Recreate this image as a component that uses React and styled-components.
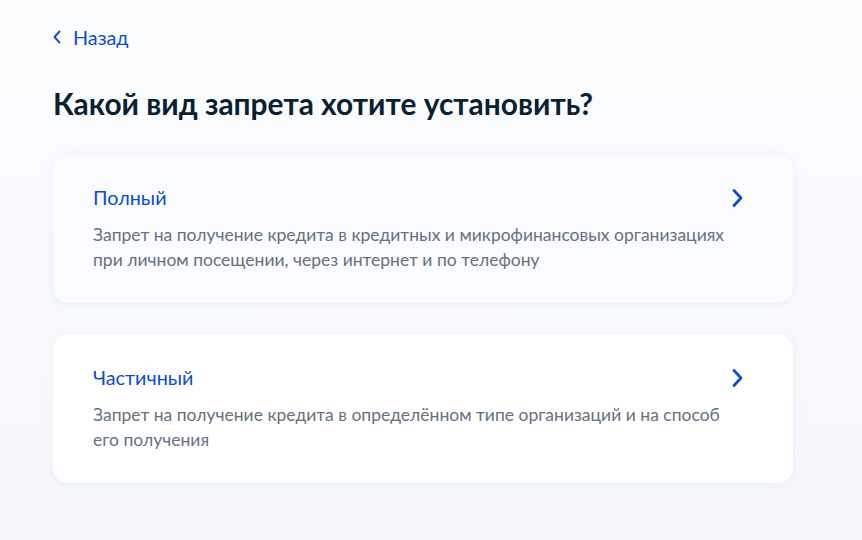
import React from 'react';
import styled, { createGlobalStyle } from 'styled-components';

const GlobalStyle = createGlobalStyle`
  html, body {
    margin: 0;
    padding: 0;
    background: #f6f8fb;
  }
  body {
    font-family: Lato, "Noto Sans", sans-serif;
    -webkit-font-smoothing: antialiased;
  }
`;

const Page = styled.main`
  width: 862px;
  height: 540px;
  box-sizing: border-box;
  padding: 24px 69px 0 53px;
  background: linear-gradient(180deg, #fbfcfe 0%, #f5f7fb 100%);
`;

const BackLink = styled.a`
  display: inline-flex;
  align-items: center;
  gap: 12px;
  color: #0d4cd3;
  font-size: 19.8px;
  line-height: 26px;
  text-decoration: none;
  cursor: pointer;
`;

const Heading = styled.h1`
  margin: 35px 0 33px;
  color: #0b1f33;
  font-size: 29.9px;
  line-height: 36px;
  font-weight: 700;
`;

const List = styled.div`
  display: flex;
  flex-direction: column;
  gap: 31px;
`;

const Card = styled.a`
  display: flex;
  align-items: flex-start;
  justify-content: space-between;
  padding: 30px 46px 31px 40px;
  border-radius: 16px;
  background: ${({ $active }) => ($active ? '#fafbff' : '#ffffff')};
  box-shadow: 0 1px 8px rgba(200, 210, 230, 0.25);
  text-decoration: none;
  cursor: pointer;
`;

const CardBody = styled.div`
  display: flex;
  flex-direction: column;
  gap: 12px;
`;

const CardTitle = styled.span`
  color: #0d4cd3;
  font-size: 19.8px;
  line-height: 26px;
`;

const CardText = styled.p`
  margin: 0;
  color: #66727f;
  font-size: 17.5px;
  line-height: 25px;
`;

const Arrow = styled.svg`
  flex: none;
  margin-top: 4px;
`;

const Chevron = () => (
  <Arrow width="20" height="20" viewBox="0 0 20 20" fill="none">
    <path
      d="M7 2.5l7 7.5-7 7.5"
      stroke="#0d4cd3"
      strokeWidth="2.8"
      strokeLinecap="round"
      strokeLinejoin="round"
    />
  </Arrow>
);

const options = [
  {
    title: 'Полный',
    text: ['Запрет на получение кредита в кредитных и микрофинансовых организациях', 'при личном посещении, через интернет и по телефону'],
    active: true,
  },
  {
    title: 'Частичный',
    text: ['Запрет на получение кредита в определённом типе организаций и на способ', 'его получения'],
  },
];

const BackIcon = styled.svg`
  flex: none;
`;

export default function App() {
  return (
    <>
      <GlobalStyle />
      <Page>
        <BackLink>
          <BackIcon width="8" height="14" viewBox="0 0 8 14" fill="none">
            <path d="M6.5 1.5L1.5 7l5 5.5" stroke="#0d4cd3" strokeWidth="1.9" strokeLinecap="round" strokeLinejoin="round" />
          </BackIcon>
          Назад
        </BackLink>
        <Heading>Какой вид запрета хотите установить?</Heading>
        <List>
          {options.map((o) => (
            <Card key={o.title} $active={o.active}>
              <CardBody>
                <CardTitle>{o.title}</CardTitle>
                <CardText>
                  {o.text[0]}
                  <br />
                  {o.text[1]}
                </CardText>
              </CardBody>
              <Chevron />
            </Card>
          ))}
        </List>
      </Page>
    </>
  );
}
